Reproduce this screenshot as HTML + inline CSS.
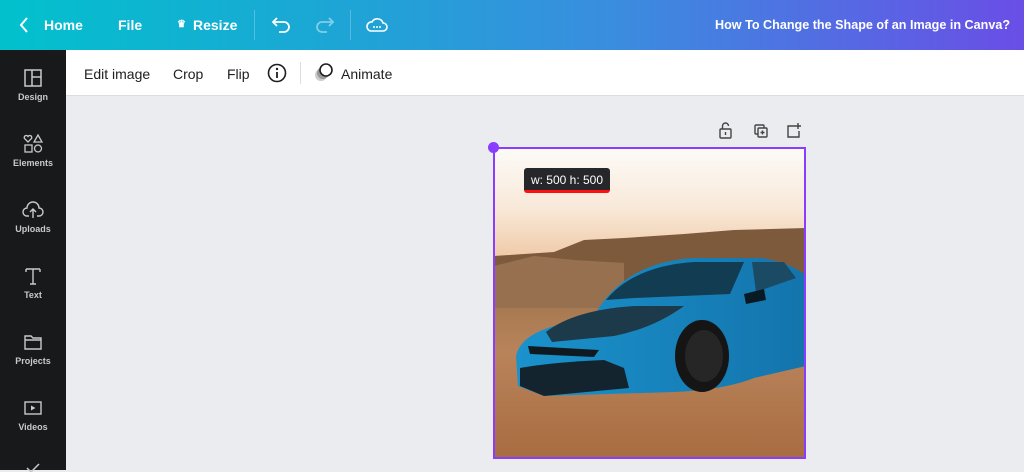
<!DOCTYPE html>
<html><head><style>
*{margin:0;padding:0;box-sizing:border-box}
body{width:1024px;height:470px;overflow:hidden;background:#ebecf0;font-family:"Liberation Sans",sans-serif;position:relative}
.top{position:absolute;left:0;top:0;width:1024px;height:50px;background:linear-gradient(90deg,#02c1cd 0%,#1aa8d4 30%,#3a8ddf 60%,#6a4ee6 100%);color:#fff;font-weight:bold;font-size:14px}
.top span{position:absolute;top:17px}
.side{position:absolute;left:0;top:50px;width:66px;height:420px;background:#18191b;color:#c8c9cc;font-size:9px;font-weight:bold}
.side .it{position:absolute;left:0;width:66px;text-align:center}
.side .it div{margin-top:2px}
.tb{position:absolute;left:66px;top:50px;width:958px;height:46px;background:#fff;border-bottom:1px solid #dcdde0;font-size:14px;color:#1e1e1e}
.tb span{position:absolute;top:16px}
</style></head><body>
<div class="top">
<svg style="position:absolute;left:18px;top:16px" width="12" height="18"><path d="M9 2 L3 9 L9 16" stroke="#fff" stroke-width="2" fill="none"/></svg>
<span style="left:44px">Home</span>
<span style="left:118px">File</span>
<span style="left:177px;font-size:10px;top:19px">♛</span>
<span style="left:193px">Resize</span>
<div style="position:absolute;left:254px;top:10px;width:1px;height:30px;background:rgba(255,255,255,.25)"></div>
<svg style="position:absolute;left:271px;top:15px" width="22" height="20"><path d="M6 3 L2 7 L6 11 M2 7 H13 a5 5 0 0 1 0 10 H8" stroke="#fff" stroke-width="1.8" fill="none"/></svg>
<svg style="position:absolute;left:313px;top:15px" width="22" height="20"><path d="M16 3 L20 7 L16 11 M20 7 H9 a5 5 0 0 0 0 10 H14" stroke="rgba(255,255,255,.45)" stroke-width="1.8" fill="none"/></svg>
<div style="position:absolute;left:350px;top:10px;width:1px;height:30px;background:rgba(255,255,255,.25)"></div>
<svg style="position:absolute;left:365px;top:14px" width="24" height="20"><path d="M6 17 H18 a4 4 0 0 0 0-8 a6 6 0 0 0-11-1 a4.5 4.5 0 0 0-1 9z" stroke="#fff" stroke-width="1.6" fill="none"/><circle cx="9" cy="13" r="1" fill="#fff"/><circle cx="12" cy="13" r="1" fill="#fff"/><circle cx="15" cy="13" r="1" fill="#fff"/></svg>
<span style="left:715px;font-size:12.6px;top:18px">How To Change the Shape of an Image in Canva?</span>
</div>
<div class="side">
<div class="it" style="top:18px"><svg width="20" height="20"><rect x="2" y="2" width="16" height="16" fill="none" stroke="#c8c9cc" stroke-width="1.5"/><path d="M9 2 V18 M9 9 H18" stroke="#c8c9cc" stroke-width="1.5"/></svg><div>Design</div></div>
<div class="it" style="top:84px"><svg width="20" height="20"><path d="M5 8 L1.5 4.5 a2 2 0 0 1 3.5-2 a2 2 0 0 1 3.5 2z" fill="none" stroke="#c8c9cc" stroke-width="1.3"/><path d="M15 1 L19 8 H11z" fill="none" stroke="#c8c9cc" stroke-width="1.3"/><rect x="2" y="11" width="7" height="7" fill="none" stroke="#c8c9cc" stroke-width="1.3"/><circle cx="15" cy="14.5" r="3.5" fill="none" stroke="#c8c9cc" stroke-width="1.3"/></svg><div>Elements</div></div>
<div class="it" style="top:150px"><svg width="22" height="20"><path d="M7 16 H5 a4 4 0 0 1 0-8 a6 6 0 0 1 12 0 a4 4 0 0 1 0 8 H15 M11 18 V9 M8 12 L11 9 L14 12" fill="none" stroke="#c8c9cc" stroke-width="1.4"/></svg><div>Uploads</div></div>
<div class="it" style="top:216px"><svg width="20" height="20"><path d="M3 3 H17 M10 3 V18 M7 18 H13 M3 3 V6 M17 3 V6" fill="none" stroke="#c8c9cc" stroke-width="1.4"/></svg><div>Text</div></div>
<div class="it" style="top:282px"><svg width="20" height="20"><path d="M2 4 H8 L10 6 H18 V17 H2z M2 8 H18" fill="none" stroke="#c8c9cc" stroke-width="1.4"/></svg><div>Projects</div></div>
<div class="it" style="top:348px"><svg width="20" height="20"><rect x="2" y="4" width="16" height="12" fill="none" stroke="#c8c9cc" stroke-width="1.4"/><path d="M8 7.5 L12.5 10 L8 12.5z" fill="#c8c9cc"/></svg><div>Videos</div></div>
<svg style="position:absolute;left:25px;top:412px" width="16" height="10"><path d="M2 6 L6 10 L14 2" stroke="#c8c9cc" stroke-width="1.5" fill="none"/></svg>
</div>
<div class="tb">
<span style="left:18px">Edit image</span>
<span style="left:107px">Crop</span>
<span style="left:161px">Flip</span>
<svg style="position:absolute;left:201px;top:13px" width="20" height="20"><circle cx="10" cy="10" r="8.5" fill="none" stroke="#1e1e1e" stroke-width="1.6"/><circle cx="10" cy="6" r="1.2" fill="#1e1e1e"/><path d="M10 9 V15" stroke="#1e1e1e" stroke-width="1.8"/></svg>
<div style="position:absolute;left:234px;top:12px;width:1px;height:22px;background:#dcdde0"></div>
<svg style="position:absolute;left:247px;top:12px" width="22" height="22"><circle cx="8" cy="13" r="6" fill="#ccc"/><circle cx="10" cy="11" r="6" fill="#999"/><circle cx="13" cy="8" r="6" fill="#fff" stroke="#1e1e1e" stroke-width="1.6"/></svg>
<span style="left:275px">Animate</span>
</div>
<svg style="position:absolute;left:718px;top:121px" width="86" height="20"><g fill="none" stroke="#444" stroke-width="1.4"><rect x="2" y="8" width="11" height="9" rx="1"/><path d="M4.5 8 V5 a3 3 0 0 1 6 0"/><path d="M7.5 11 V14"/><rect x="37" y="4" width="9" height="9" rx="1"/><rect x="40" y="7" width="9" height="9" rx="1" fill="#ebecf0"/><path d="M44.5 9.5 V13.5 M42.5 11.5 H46.5"/><path d="M77 5 H70 V16 H81 V10 M80 2 V8 M77 5 H83"/></g></svg>
<div style="position:absolute;left:494px;top:148px;width:312px;height:311px;overflow:hidden">
<svg width="312" height="311" viewBox="0 0 312 311">
<defs>
<linearGradient id="sky" x1="0" y1="0" x2="0" y2="1"><stop offset="0" stop-color="#fdfbf8"/><stop offset=".5" stop-color="#f8e9d9"/><stop offset="1" stop-color="#eec39c"/></linearGradient>
<linearGradient id="gr" x1="0" y1="0" x2="0" y2="1"><stop offset="0" stop-color="#a87a52"/><stop offset=".3" stop-color="#b9835a"/><stop offset="1" stop-color="#a86c40"/></linearGradient>
<linearGradient id="car" x1="0" y1="0" x2="1" y2="0"><stop offset="0" stop-color="#1a92cc"/><stop offset="1" stop-color="#1474ac"/></linearGradient>
</defs>
<rect width="312" height="120" fill="url(#sky)"/>
<path d="M0 108 L60 104 L90 92 L130 90 L190 86 L240 82 L312 80 V200 H0z" fill="#7e5a3c"/>
<path d="M0 118 L40 108 L80 112 L130 115 V200 H0z" fill="#97714f"/>
<rect y="160" width="312" height="151" fill="url(#gr)"/>
<g transform="translate(0,18)">
<path d="M100 150 Q130 96 200 92 L268 92 Q300 98 312 110 V200 L260 212 Q230 224 180 226 L50 230 L24 220 L22 190 Q26 170 60 160z" fill="url(#car)"/>
<path d="M112 134 Q140 100 200 96 L250 96 L236 128 L140 132z" fill="#123c52"/>
<path d="M258 96 L290 96 L302 112 L262 126z" fill="#1b4b64"/>
<path d="M52 166 Q80 144 140 140 L190 140 Q160 162 120 170 L58 176z" fill="#1d3a4a"/>
<path d="M26 202 Q60 196 110 194 L130 202 L135 222 L50 230 L26 220z" fill="#13242e"/>
<path d="M34 180 L105 184 L100 191 L36 188z" fill="#0e1a20"/>
<ellipse cx="208" cy="190" rx="27" ry="36" fill="#151515"/>
<ellipse cx="210" cy="190" rx="19" ry="26" fill="#262626"/>
<path d="M250 128 L270 123 L272 134 L252 138z" fill="#0a1a24"/>
</g>
</svg>
</div>
<div style="position:absolute;left:493px;top:147px;width:313px;height:312px;border:2px solid #8b3dff"></div>
<div style="position:absolute;left:488px;top:142px;width:11px;height:11px;border-radius:50%;background:#8b3dff"></div>
<div style="position:absolute;left:524px;top:168px;width:86px;height:25px;background:#26272b;border-radius:3px;color:#fff;font-size:12px;line-height:24px;text-align:center;border-bottom:3px solid #ff1010">w: 500 h: 500</div>
</body></html>
